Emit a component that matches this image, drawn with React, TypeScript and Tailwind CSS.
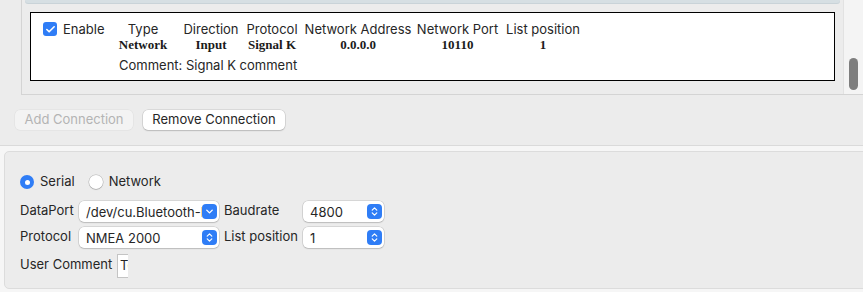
import { Check, ChevronDown, ChevronsUpDown } from 'lucide-react';

const columns = [
  { head: 'Type', value: 'Network', w: 'w-[48px]', ml: 'ml-0' },
  { head: 'Direction', value: 'Input', w: 'w-[54px]', ml: 'ml-[17px]' },
  { head: 'Protocol', value: 'Signal K', w: 'w-[50px]', ml: 'ml-[9px]' },
  { head: 'Network Address', value: '0.0.0.0', w: 'w-[104px]', ml: 'ml-[9px]' },
  { head: 'Network Port', value: '10110', w: 'w-[79px]', ml: 'ml-[8px]' },
  { head: 'List position', value: '1', w: 'w-[74px]', ml: 'ml-[9px]' },
];

function PopUp({ value, width, stepper }: { value: string; width: string; stepper?: boolean }) {
  return (
    <div
      className={`${width} h-[21px] bg-white rounded-[5px] flex items-center pl-[7px] pr-[2px] shadow-[0_0_0_0.5px_rgba(0,0,0,0.18),0_1px_1.5px_rgba(0,0,0,0.12)]`}
    >
      <span className="flex-1 min-w-0 overflow-hidden whitespace-nowrap leading-[16px]">{value}</span>
      <span className="w-[15px] h-[15px] shrink-0 rounded-[4px] bg-[#2f7df6] flex items-center justify-center text-white">
        {stepper ? (
          <ChevronsUpDown size={11} strokeWidth={2.6} />
        ) : (
          <ChevronDown size={11} strokeWidth={3} />
        )}
      </span>
    </div>
  );
}

export default function App() {
  return (
    <div className="w-[863px] h-[292px] overflow-hidden bg-[#f6f6f6] font-['Inter','Liberation_Sans',sans-serif] text-[13px] text-[#262626]">
      {/* connections list */}
      <div className="h-[146px] bg-[#ececec] border-b border-[#dadada]">
        <div className="flex h-[95px] ml-[21px] border-l border-b border-[#d4d4d4]">
          <div className="flex-1 min-w-0">
            <div className="mx-[3px] h-[3px] bg-[#d6dfe3] rounded-b-[5px] shadow-[0_1px_0_#c9d3d8]" />
            <div className="mt-[9px] mx-[8px] h-[69px] bg-white border border-black pt-[8px]">
              <div className="flex">
                <div className="w-[88px] pl-[12px] flex items-start">
                  <span className="mt-[1px] w-[14px] h-[14px] rounded-[3px] bg-[#2f7df6] flex items-center justify-center text-white">
                    <Check size={11} strokeWidth={3.5} />
                  </span>
                  <span className="ml-[6px] leading-[16px]">Enable</span>
                </div>
                {columns.map((c) => (
                  <div key={c.head} className={`${c.w} ${c.ml} flex flex-col items-center whitespace-nowrap`}>
                    <span className="leading-[16px]">{c.head}</span>
                    <span className="leading-[16px] font-['Liberation_Serif',serif] font-bold text-[13px] text-[#1a1a1a]">
                      {c.value}
                    </span>
                  </div>
                ))}
              </div>
              <div className="pl-[88px] mt-[4px] leading-[16px]">Comment: Signal K comment</div>
            </div>
          </div>
          <div className="w-[20px] bg-[#f4f4f4] border-l border-[#e2e2e2] flex justify-center pt-[58px]">
            <div className="w-[9px] h-[32px] rounded-full bg-[#7e7e7e]" />
          </div>
        </div>
        <div className="flex gap-[10px] ml-[15px] mt-[15px]">
          <button className="w-[118px] h-[20px] rounded-[5px] bg-[#f3f3f3] text-[#b4b4b4] shadow-[0_0_0_0.5px_rgba(0,0,0,0.06)]">
            Add Connection
          </button>
          <button className="w-[142px] h-[20px] rounded-[5px] bg-white text-[#262626] shadow-[0_0_0_0.5px_rgba(0,0,0,0.16),0_1px_1.5px_rgba(0,0,0,0.14)]">
            Remove Connection
          </button>
        </div>
      </div>

      {/* connection editor */}
      <div className="mt-[5px] ml-[4px] w-[870px] h-[138px] bg-[#ececec] border border-[#dcdcdc] rounded-[5px] pl-[15px] pt-[23px]">
        <div className="flex items-center h-[14px]">
          <span className="w-[14px] h-[14px] rounded-full bg-[#2f7df6] flex items-center justify-center">
            <span className="w-[5px] h-[5px] rounded-full bg-white" />
          </span>
          <span className="ml-[6px]">Serial</span>
          <span className="ml-[14px] w-[14px] h-[14px] rounded-full bg-white shadow-[0_0_0_0.5px_rgba(0,0,0,0.25),0_1px_1px_rgba(0,0,0,0.12)]" />
          <span className="ml-[6px]">Network</span>
        </div>
        <div className="mt-[12px] flex flex-col gap-[5px]">
          <div className="flex items-center">
            <span className="w-[59px] leading-[16px] pb-[3px]">DataPort</span>
            <PopUp value="/dev/cu.Bluetooth-Incoming-Port" width="w-[140px]" />
            <span className="ml-[5px] w-[79px] leading-[16px] pb-[3px]">Baudrate</span>
            <PopUp value="4800" width="w-[81px]" stepper />
          </div>
          <div className="flex items-center">
            <span className="w-[59px] leading-[16px] pb-[3px]">Protocol</span>
            <PopUp value="NMEA 2000" width="w-[140px]" stepper />
            <span className="ml-[5px] w-[79px] leading-[16px] pb-[3px] whitespace-nowrap">List position</span>
            <PopUp value="1" width="w-[81px]" stepper />
          </div>
          <div className="flex items-center mt-[1px]">
            <span className="w-[97px] leading-[16px] pb-[5px] whitespace-nowrap">User Comment</span>
            <div className="w-[11px] h-[24px] bg-white border-l border-t border-b border-[#c4c4c4] overflow-hidden pl-[2px] flex items-center">
              <span>Test</span>
            </div>
          </div>
        </div>
      </div>
    </div>
  );
}
